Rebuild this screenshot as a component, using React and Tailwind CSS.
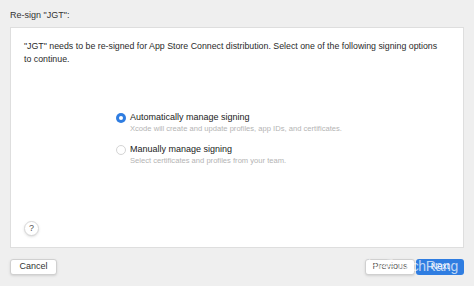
export default function App() {
  return (
    <div
      className="w-[474px] h-[286px] bg-[#efefef] flex flex-col px-[10px] text-[#262626] overflow-hidden"
      style={{ fontFamily: '"Liberation Sans", "Noto Sans CJK SC", sans-serif' }}
    >
      <div className="pt-[10px] h-[27px] text-[9px] leading-[11px] text-[#333]">Re-sign "JGT":</div>

      <div className="h-[221px] bg-white border border-[#dedede] flex flex-col pl-[13px] pr-[8px]">
        <p className="mt-[12px] text-[8.8px] leading-[13px] text-[#2a2a2a] whitespace-nowrap">
          "JGT" needs to be re-signed for App Store Connect distribution. Select one of the following signing options
          <br />
          to continue.
        </p>

        <div className="mt-[46px] ml-[92px] flex flex-col gap-[10px]">
          <div className="flex gap-[4px]">
            <div className="mt-[1px] w-[10px] h-[10px] rounded-full bg-[#2f7de1] flex items-center justify-center shrink-0">
              <div className="w-[4px] h-[4px] rounded-full bg-white" />
            </div>
            <div className="flex flex-col">
              <span className="text-[9px] leading-[11px] text-[#222]">Automatically manage signing</span>
              <span className="text-[7.6px] leading-[11px] text-[#b4b4b4]">
                Xcode will create and update profiles, app IDs, and certificates.
              </span>
            </div>
          </div>
          <div className="flex gap-[4px]">
            <div className="mt-[1px] w-[10px] h-[10px] rounded-full bg-white border border-[#d4d4d4] shrink-0" />
            <div className="flex flex-col">
              <span className="text-[9px] leading-[11px] text-[#222]">Manually manage signing</span>
              <span className="text-[7.6px] leading-[11px] text-[#b4b4b4]">
                Select certificates and profiles from your team.
              </span>
            </div>
          </div>
        </div>

        <div className="mt-auto mb-[11px] w-[15px] h-[15px] rounded-full border border-[#d8d8d8] bg-white flex items-center justify-center text-[9px] text-[#555] shadow-sm">
          ?
        </div>
      </div>

      <div className="mt-[11px] flex items-center">
        <div className="w-[47px] h-[16px] bg-white border border-[#d0d0d0] rounded-[3px] flex items-center justify-center text-[9px] text-[#333] shadow-sm">
          Cancel
        </div>
        <div className="ml-auto relative flex gap-[1px]">
          <div className="w-[50px] h-[16px] bg-white border border-[#d0d0d0] rounded-[3px] flex items-center justify-center text-[9px] text-[#555] shadow-sm">
            Previous
          </div>
          <div className="w-[48px] h-[16px] bg-[#2f7de1] rounded-[3px] flex items-center justify-center text-[9px] text-white">
            Next
          </div>
          <div className="absolute left-[2px] top-[-3px] text-[14px] leading-[20px] text-white/70 whitespace-nowrap tracking-tight">
            知乎 @chRang
          </div>
        </div>
      </div>
    </div>
  );
}
